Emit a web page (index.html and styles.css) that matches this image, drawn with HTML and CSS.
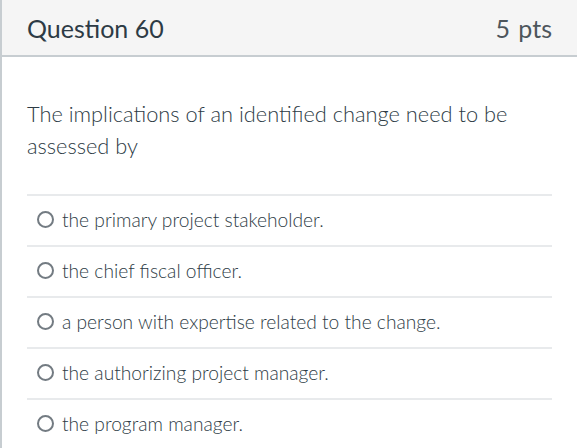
FILE: index.html
```html
<!DOCTYPE html>
<html>
<head>
<meta charset="utf-8">
<link rel="stylesheet" href="styles.css">
</head>
<body>
<div class="question">
  <div class="header">
    <span class="title">Question 60</span>
    <span class="pts">5 pts</span>
  </div>
  <div class="content">
    <div class="text">The implications of an identified change need to be assessed by</div>
    <div class="answers">
      <div class="answer"><span class="radio"></span><span class="label">the primary project stakeholder.</span></div>
      <div class="answer"><span class="radio"></span><span class="label">the chief fiscal officer.</span></div>
      <div class="answer"><span class="radio"></span><span class="label">a person with expertise related to the change.</span></div>
      <div class="answer"><span class="radio"></span><span class="label">the authorizing project manager.</span></div>
      <div class="answer"><span class="radio"></span><span class="label">the program manager.</span></div>
    </div>
  </div>
</div>
</body>
</html>
```
FILE: styles.css
```css
html, body {
  margin: 0;
  padding: 0;
  background: #fff;
}
body {
  font-family: Lato, "Open Sans", sans-serif;
  color: #2d3b45;
  width: 577px;
  height: 448px;
  overflow: hidden;
}
.question {
  border-left: 2px solid #c7cdd1;
  height: 448px;
}
.header {
  background: #f5f5f5;
  border-bottom: 2px solid #c7cdd1;
  height: 55px;
  display: flex;
  align-items: center;
  justify-content: space-between;
  padding: 0 25px 0 25px;
}
.title {
  font-size: 25px;
  font-weight: 400;
  color: #2d3b45;
}
.pts {
  font-size: 25px;
  font-weight: 400;
  word-spacing: 2px;
  color: #4d565c;
}
.content {
  padding: 0 25px 0 25px;
}
.text {
  font-size: 21.8px;
  line-height: 32px;
  padding-top: 41px;
  padding-bottom: 32px;
  font-weight: 300;
  width: 500px;
}
.answer {
  border-top: 2px solid #e8eaec;
  display: flex;
  align-items: center;
  padding-left: 10px;
  padding-bottom: 3px;
  box-sizing: border-box;
  height: 51px;
}
.radio {
  width: 17px;
  height: 17px;
  border: 2px solid #737b82;
  border-radius: 50%;
  box-sizing: border-box;
  margin-right: 8px;
  flex: none;
}
.label {
  font-size: 19.2px;
  font-weight: 300;
}
```
